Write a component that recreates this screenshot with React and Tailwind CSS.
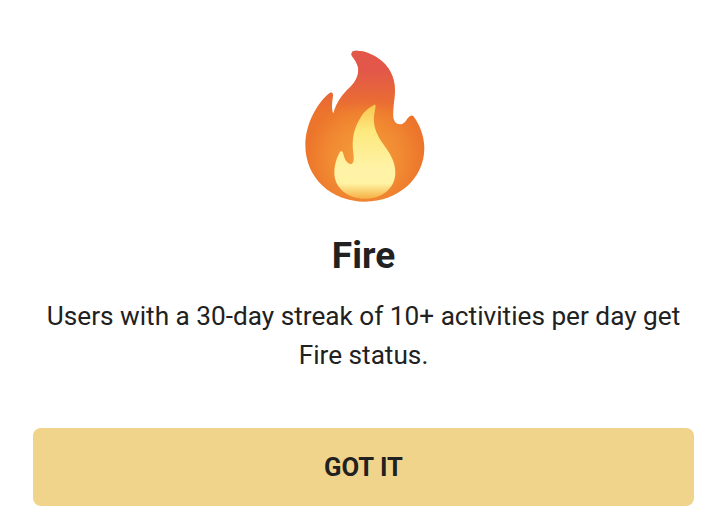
export default function App() {
  return (
    <div className="h-[527px] w-[720px] bg-white pl-[33px] pr-[26px] pt-[30px] flex flex-col items-center font-['Roboto',sans-serif] text-[#212121] overflow-hidden">
      {/* flame, coordinates traced at 3x */}
      <svg width="170" height="190" viewBox="-3 0 510 570" className="shrink-0 blur-[0.5px]">
        <defs>
          <radialGradient id="outerGlow" gradientUnits="userSpaceOnUse" cx="255" cy="385" r="180">
            <stop offset="0" stopColor="#f4a03a" />
            <stop offset="0.6" stopColor="#f18a32" />
            <stop offset="1" stopColor="#ec742b" />
          </radialGradient>
          <linearGradient id="topRed" gradientUnits="userSpaceOnUse" x1="255" y1="120" x2="255" y2="250">
            <stop offset="0" stopColor="#e2574a" />
            <stop offset="1" stopColor="#e2574a" stopOpacity="0" />
          </linearGradient>
          <linearGradient id="innerFlame" gradientUnits="userSpaceOnUse" x1="255" y1="224" x2="255" y2="506">
            <stop offset="0" stopColor="#f9c650" />
            <stop offset="0.28" stopColor="#fde97e" />
            <stop offset="0.7" stopColor="#fff3a8" />
            <stop offset="0.84" stopColor="#fff2a2" />
            <stop offset="1" stopColor="#f6b044" />
          </linearGradient>
        </defs>
        <path
          d="M216 66C224 60 242 62 262 68C310 85 345 125 345 180C345 205 338 235 340 262C343 285 365 290 378 272C384 262 392 252 400 258C420 285 433 320 433 355C433 445 355 515 255 515C155 515 76 445 76 345C76 290 105 225 148 190C155 184 160 190 159 197C156 215 154 240 160 250C170 215 190 190 210 172C232 150 240 125 232 105C228 92 218 82 214 74Z"
          fill="url(#outerGlow)"
        />
        <path
          d="M216 66C224 60 242 62 262 68C310 85 345 125 345 180C345 205 338 235 340 262C343 285 365 290 378 272C384 262 392 252 400 258C420 285 433 320 433 355C433 445 355 515 255 515C155 515 76 445 76 345C76 290 105 225 148 190C155 184 160 190 159 197C156 215 154 240 160 250C170 215 190 190 210 172C232 150 240 125 232 105C228 92 218 82 214 74Z"
          fill="url(#topRed)"
        />
        <path
          d="M283 224C288 222 287 232 284 246C276 280 288 312 308 340C330 370 346 395 346 428C346 475 305 506 255 506C205 506 163 475 163 428C163 405 170 382 180 366C184 360 188 364 190 372C194 390 204 404 214 402C222 400 222 385 220 370C214 325 222 290 250 250C260 238 272 230 283 224Z"
          fill="url(#innerFlame)"
        />
      </svg>

      <h1 className="mt-[12px] text-[37px] leading-[48px] font-bold">Fire</h1>

      <p className="mt-[17px] text-center text-[26.2px] leading-[39px]">
        Users with a 30-day streak of 10+ activities per day get
        <br />
        Fire status.
      </p>

      <button className="mt-[53px] h-[78px] w-full shrink-0 rounded-lg bg-[#f1d48b] text-[25.6px] font-bold">
        GOT IT
      </button>
    </div>
  );
}
